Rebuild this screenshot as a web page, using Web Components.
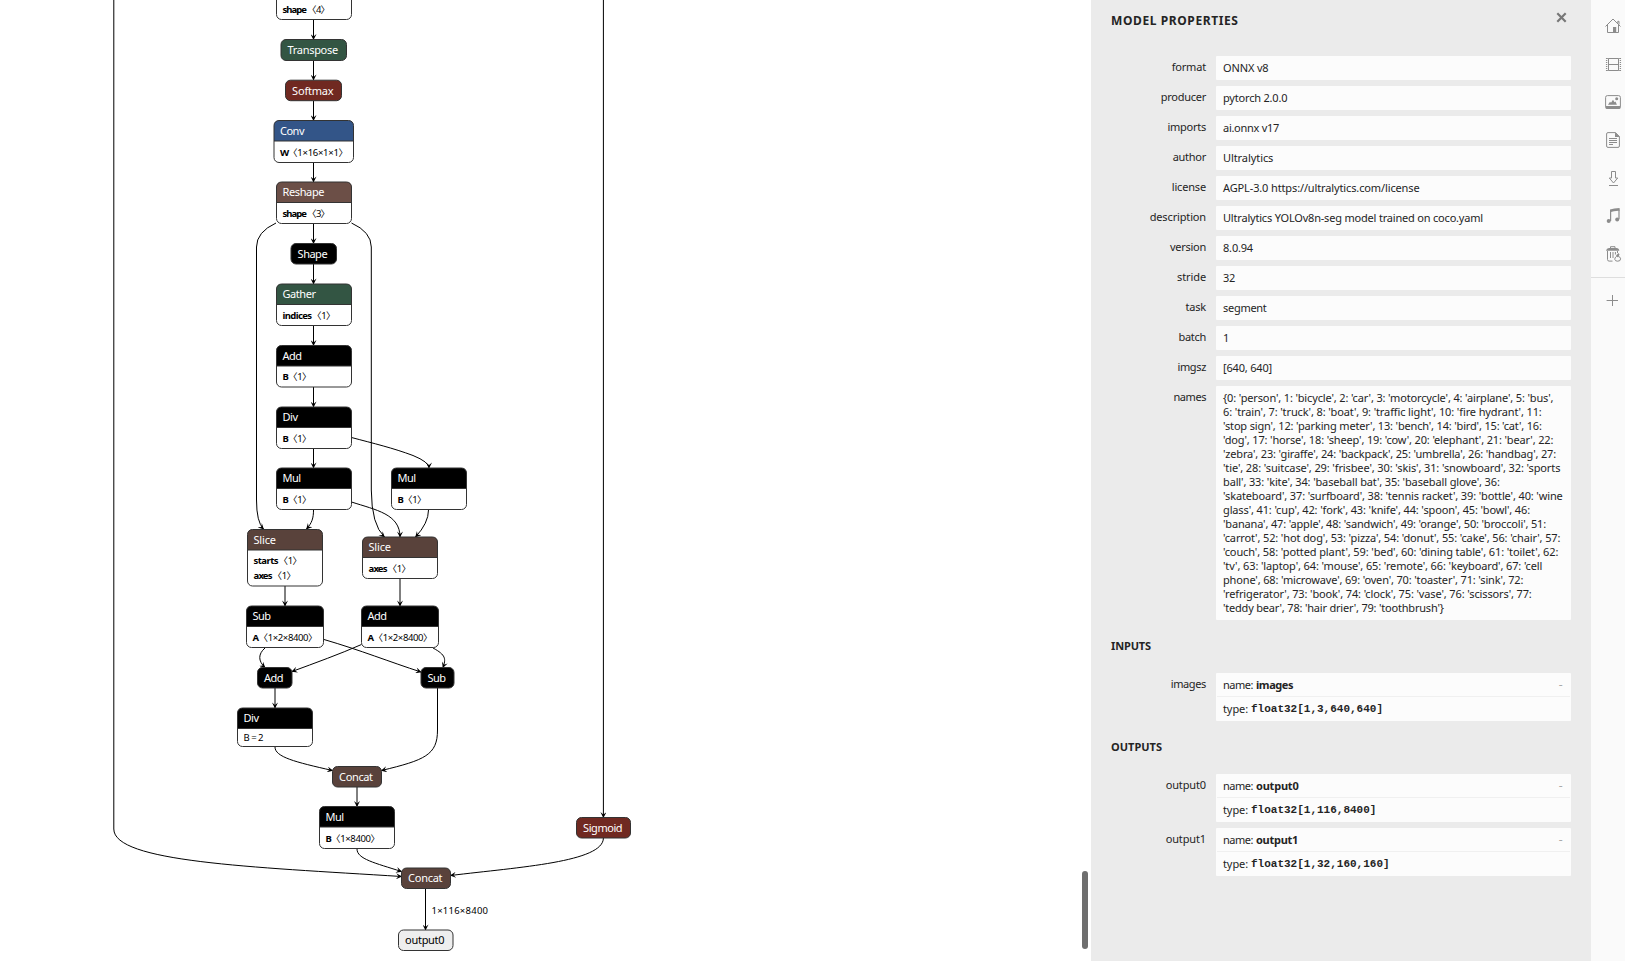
<!DOCTYPE html>
<html lang="en">
<head>
<meta charset="utf-8">
<title>Model viewer</title>
<style>
    body {
        margin: 0;
        font-family: "Noto Sans", "Open Sans", "Noto Sans CJK SC", sans-serif;
        font-size: 11px;
        background: #fff;
        overflow: hidden;
    }
</style>
</head>
<body>
<viewer-app></viewer-app>

<script>
const NODES = [
    // scrolled partly out, only the last row shows
    { x: 276.5, y: -22, w: 75, h: 41.5, head: 20.5, title: '', tw: 0, fill: '#6c4f47', rows: [['shape', 24.5, '〈4〉', 12, 35]] },
    { x: 281, y: 39.5, w: 65.5, h: 21, title: 'Transpose', tw: 50.5, fill: '#335543' },
    { x: 285.5, y: 80.2, w: 56, h: 20.5, title: 'Softmax', tw: 41.5, fill: '#702921' },
    { x: 274, y: 120.5, w: 79.5, h: 42, head: 20.5, title: 'Conv', tw: 24.5, fill: '#335588', rows: [['W', 8, '〈1×16×1×1〉', 49, 35.5]] },
    { x: 276.5, y: 182, w: 75, h: 41.5, head: 20.5, title: 'Reshape', tw: 42, fill: '#6c4f47', rows: [['shape', 24.5, '〈3〉', 12, 35]] },
    { x: 291, y: 243.5, w: 45.5, h: 20.5, title: 'Shape', tw: 30, fill: '#000' },
    { x: 276.5, y: 284, w: 75, h: 41.5, head: 20.5, title: 'Gather', tw: 33.5, fill: '#335543', rows: [['indices', 29.5, '〈1〉', 12.5, 35]] },
    { x: 276.5, y: 345.5, w: 75, h: 41.5, head: 20.5, title: 'Add', tw: 19.5, fill: '#000', rows: [['B', 5.5, '〈1〉', 12.5, 34.5]] },
    { x: 276.5, y: 407, w: 75, h: 41.5, head: 20.5, title: 'Div', tw: 15.5, fill: '#000', rows: [['B', 5.5, '〈1〉', 12.5, 35]] },
    { x: 276.5, y: 468, w: 75, h: 41.5, head: 20.5, title: 'Mul', tw: 18.5, fill: '#000', rows: [['B', 5.5, '〈1〉', 12.5, 35]] },
    { x: 391.5, y: 468, w: 75, h: 41.5, head: 20.5, title: 'Mul', tw: 18.5, fill: '#000', rows: [['B', 5.5, '〈1〉', 12.5, 35]] },
    { x: 247.5, y: 529.5, w: 75, h: 56.5, head: 20.5, title: 'Slice', tw: 22.5, fill: '#59423b', rows: [['starts', 25, '〈1〉', 12.5, 34.5], ['axes', 19, '〈1〉', 12.5, 49.5]] },
    { x: 362.5, y: 537, w: 75, h: 41.5, head: 20.5, title: 'Slice', tw: 22.5, fill: '#59423b', rows: [['axes', 19, '〈1〉', 12.5, 35]] },
    { x: 246.5, y: 606, w: 77, h: 41.5, head: 20.5, title: 'Sub', tw: 18.5, fill: '#000', rows: [['A', 6, '〈1×2×8400〉', 48, 35]] },
    { x: 361.5, y: 606, w: 77, h: 41.5, head: 20.5, title: 'Add', tw: 19.5, fill: '#000', rows: [['A', 6, '〈1×2×8400〉', 48, 35]] },
    { x: 257.5, y: 667.5, w: 34.5, h: 20.5, title: 'Add', tw: 19.5, fill: '#000' },
    { x: 421, y: 667.5, w: 33, h: 20.5, title: 'Sub', tw: 18.5, fill: '#000' },
    { x: 237.5, y: 708, w: 75, h: 38.5, head: 20.5, title: 'Div', tw: 15.5, fill: '#000', rows: [['', 0, 'B = 2', 20, 33]] },
    { x: 332.5, y: 766.5, w: 49, h: 20.5, title: 'Concat', tw: 34, fill: '#59423b' },
    { x: 319.5, y: 806.5, w: 75, h: 42, head: 20.5, title: 'Mul', tw: 18.5, fill: '#000', rows: [['B', 5.5, '〈1×8400〉', 38, 35.5]] },
    { x: 401.5, y: 868, w: 49, h: 20.5, title: 'Concat', tw: 34.5, fill: '#59423b' },
    { x: 576.5, y: 817.5, w: 54, h: 20.5, title: 'Sigmoid', tw: 39.5, fill: '#702921' },
    { x: 398.5, y: 930, w: 54.5, h: 20.5, title: 'output0', tw: 39.5, fill: '#eee', color: '#000' },
];

const EDGES = [
    'M313.5 20V39.5', 'M313.5 61V80', 'M313.5 101V120.5', 'M313.5 163V182',
    'M313.5 224V243.5', 'M313.5 264V284', 'M313.5 326V345.5', 'M313.5 387V407',
    'M313.5 449V468',
    'M276 223Q256.5 232 256.5 247V500Q256.5 522 263.5 529',
    'M351.5 223Q371.3 232 371.3 247V490Q371.5 525 384.5 537',
    'M351.5 437.5C374 443.5 393 448 413 455.500Q429 462 429 468',
    'M313.5 510C313.5 518 312 523 306.500 529',
    'M351.5 502C376 510 400 514 400 537',
    'M428.5 510Q428.500 523 415.500 537',
    'M285 586V606', 'M400 579V606',
    'M265 648C258 654 258 661 265 667.5',
    'M324 639.5C360 650 390 662 421 672',
    'M361.5 644.5C340 654 315 663 292 671.5',
    'M433 648C446 655 446 659 443 667.5',
    'M275 688V708',
    'M437.5 688V730C437.5 755 425 760 381.5 770.5',
    'M275 747C275 757 295 762 332.5 770.5',
    'M357 787V806.5',
    'M357 849C357 859 375 863 401.5 871.5',
    'M113.8 0V829C113.8 862 250 867 401.5 876.5',
    'M603.4 0V817.5',
    'M603.4 838C603.4 862 520 867 450.500 875.5',
    'M425.5 889V930',
];

// [label, label width, value lines as [text, width]]
const PROPERTIES = [
    ['format', 34.3, [['ONNX v8', 45.5]]],
    ['producer', 45.3, [['pytorch 2.0.0', 64.3]]],
    ['imports', 38.6, [['ai.onnx v17', 56]]],
    ['author', 33.3, [['Ultralytics', 50.3]]],
    ['license', 34.3, [['AGPL-3.0 https://ultralytics.com/license', 196.5]]],
    ['description', 56.3, [['Ultralytics YOLOv8n-seg model trained on coco.yaml', 260]]],
    ['version', 36, [['8.0.94', 30]]],
    ['stride', 29, [['32', 12]]],
    ['task', 20.6, [['segment', 43.5]]],
    ['batch', 27.6, [['1', 6]]],
    ['imgsz', 28.6, [['[640, 640]', 49]]],
    ['names', 32.5, [
        ["{0: 'person', 1: 'bicycle', 2: 'car', 3: 'motorcycle', 4: 'airplane', 5: 'bus',", 330.3],
        ["6: 'train', 7: 'truck', 8: 'boat', 9: 'traffic light', 10: 'fire hydrant', 11:", 318.7],
        ["'stop sign', 12: 'parking meter', 13: 'bench', 14: 'bird', 15: 'cat', 16:", 318.7],
        ["'dog', 17: 'horse', 18: 'sheep', 19: 'cow', 20: 'elephant', 21: 'bear', 22:", 330.3],
        ["'zebra', 23: 'giraffe', 24: 'backpack', 25: 'umbrella', 26: 'handbag', 27:", 333],
        ["'tie', 28: 'suitcase', 29: 'frisbee', 30: 'skis', 31: 'snowboard', 32: 'sports", 337.3],
        ["ball', 33: 'kite', 34: 'baseball bat', 35: 'baseball glove', 36:", 276.7],
        ["'skateboard', 37: 'surfboard', 38: 'tennis racket', 39: 'bottle', 40: 'wine", 339.7],
        ["glass', 41: 'cup', 42: 'fork', 43: 'knife', 44: 'spoon', 45: 'bowl', 46:", 307],
        ["'banana', 47: 'apple', 48: 'sandwich', 49: 'orange', 50: 'broccoli', 51:", 323],
        ["'carrot', 52: 'hot dog', 53: 'pizza', 54: 'donut', 55: 'cake', 56: 'chair', 57:", 337.3],
        ["'couch', 58: 'potted plant', 59: 'bed', 60: 'dining table', 61: 'toilet', 62:", 335.3],
        ["'tv', 63: 'laptop', 64: 'mouse', 65: 'remote', 66: 'keyboard', 67: 'cell", 319.3],
        ["phone', 68: 'microwave', 69: 'oven', 70: 'toaster', 71: 'sink', 72:", 300.3],
        ["'refrigerator', 73: 'book', 74: 'clock', 75: 'vase', 76: 'scissors', 77:", 308.7],
        ["'teddy bear', 78: 'hair drier', 79: 'toothbrush'}", 220.7],
    ]],
];

const ICONS = {
    home: '<path d="M1.500 10.500 9 3l7.500 7.500M3.500 9v7.500h11V9M13.800 7V5.300h1.200V8.500"/><path fill="currentColor" stroke="none" d="M9 11h3.200v5.500H9z"/>',
    film: '<path d="M4.500 4.500h10v12h-10zM4.500 10.500h10"/><path stroke-dasharray="1 1" stroke-width="1.300" d="M2.600 4v13M16.400 4v13"/><path d="M2.600 4.500h2M2.600 16.500h2M14.400 4.500h2M14.400 16.500h2" stroke-width=".8"/>',
    image: '<rect x="1.600" y="3.600" width="14.800" height="12.600" rx="1.800"/><path fill="currentColor" stroke="none" d="M1.500 14h15v2q0 1-1.500 1H3q-1.500 0-1.500-1zM4 12.800l2-3 1 1 2-3 1.500 2.500 1-.8 1.400 3.300z"/><circle cx="12.700" cy="6.700" r="1.500" fill="currentColor" stroke="none"/>',
    document: '<path d="M4 2.600h7.500l3.900 3.900v9.500q0 1.400-1.400 1.400H4q-1.400 0-1.400-1.400V4q0-1.400 1.400-1.400z"/><path fill="currentColor" stroke="none" d="M11 2.300 15.700 7H11z"/><path d="M5 8.500h8M5 10.500h8M5 12.500h8M5 14.500h4"/>',
    download: '<path d="M7.500 3.500h4v6.500h2.200L9.500 15 5.300 10h2.200zM5 17.500h9"/>',
    music: '<path stroke-width="1.200" d="M6.600 15V4.600M15 13V3.500"/><path fill="currentColor" stroke="none" d="M6 3.500Q10 2 15.600 2v2.700Q10 4.500 6 6.300z"/><ellipse cx="4.700" cy="15" rx="2" ry="2" fill="currentColor" stroke="none"/><ellipse cx="13.200" cy="13.500" rx="2" ry="2" fill="currentColor" stroke="none"/>',
    trash: '<path fill="currentColor" stroke="none" d="M2 6.700Q2.500 4 5 4h7.500q2.500 0 2.800 2.700z"/><path d="M6.500 4V2.700h4.500V4M3.500 7v8.500q0 1.600 1.600 1.600H8.500M13.500 7v2M6.500 8v6M9 8v6M11.400 8v2.500"/><path d="M14.500 12 12.500 12.500Q10.500 13.500 10.800 15.500 11.200 17.200 13.700 17.200 16.600 17.200 16.600 14.800 16.500 13 14.500 12.500"/><path fill="currentColor" stroke="none" d="M12 11.500l2.500-2.500 1 1.500-1.500 3z"/>',
    plus: '<path d="M2.600 10.500h11.400M8.500 5v11"/>',
};

/**
 * Text set to a given width by letter spacing.
 *
 * @element fit-text
 */
class FitText extends HTMLElement {
    constructor() {
        super();
        this.attachShadow({ mode: 'open' });
        this.shadowRoot.innerHTML = `
            <style>
                :host { display: inline-block; white-space: pre; }
            </style>
            <slot></slot>
        `.replace(/\n\s*/g, '');
    }

    connectedCallback() {
        const width = parseFloat(this.getAttribute('width'));
        const natural = this.getBoundingClientRect().width;
        if (!width || !natural) return;
        this.style.letterSpacing = `${(width - natural) / this.textContent.length}px`;
    }
}

/**
 * One operator box of the graph.
 *
 * @element graph-node
 */
class GraphNode extends HTMLElement {
    constructor() {
        super();
        this.attachShadow({ mode: 'open' });
    }

    set data(node) {
        this.style.left = `${Math.floor(node.x)}px`;
        this.style.top = `${Math.floor(node.y)}px`;
        this.render(node);
    }

    row([name, nameWidth, value, valueWidth, y]) {
        const x = 6;
        if (!name) {
            return `<text class="row" x="${x}" y="${y}" textLength="${valueWidth}">${value}</text>`;
        }
        // the angle brackets are full width, half of each is blank
        return `
            <text class="row name" x="${x}" y="${y}" textLength="${nameWidth}">${name}</text>
            <text class="row" x="${x + nameWidth + 0.1}" y="${y}" textLength="${valueWidth + 11}">${value}</text>
        `;
    }

    render(node) {
        const { w, h, head = h, title, tw, fill, color = '#fff', rows = [] } = node;
        const dx = node.x - Math.floor(node.x);
        const dy = node.y - Math.floor(node.y);
        const top = rows.length
            ? `M0 ${head}V5Q0 0 5 0H${w - 5}Q${w} 0 ${w} 5V${head}Z`
            : '';
        this.shadowRoot.innerHTML = /*html*/`
            <style>
                :host { display: block; position: absolute; }
                svg { display: block; overflow: visible; }
                .title { font-size: 11px; }
                .row { font-size: 9.5px; }
                .name { font-weight: 700; }
            </style>
            <svg width="${w}" height="${h}">
                <g transform="translate(${dx} ${dy})">
                    <rect width="${w}" height="${h}" rx="5" fill="${rows.length ? '#fff' : fill}"/>
                    ${top ? `<path d="${top}" fill="${fill}"/><path d="M0 ${head}H${w}" stroke="#333"/>` : ''}
                    <rect width="${w}" height="${h}" rx="5" fill="none" stroke="#333"/>
                    ${title ? `<text class="title" x="${rows.length ? 6 : 6.6}" y="14.4" fill="${color}" textLength="${tw}">${title}</text>` : ''}
                    ${rows.map(this.row).join('')}
                </g>
            </svg>
        `;
    }
}

/**
 * The graph canvas, edges below nodes.
 *
 * @element model-graph
 */
class ModelGraph extends HTMLElement {
    constructor() {
        super();
        this.attachShadow({ mode: 'open' });
    }

    connectedCallback() {
        this.shadowRoot.innerHTML = /*html*/`
            <style>
                :host { display: block; position: relative; overflow: hidden; background: #fff; }
                .edges { display: block; }
                .edges text { font-size: 9.5px; }
                .thumb {
                    position: absolute;
                    right: 3px;
                    top: 871px;
                    width: 6px;
                    height: 78px;
                    border-radius: 3px;
                    background: #6e6e6e;
                }
            </style>
            <svg class="edges" width="1091" height="961">
                <defs>
                    <marker id="vee" viewBox="0 0 10 10" refX="9" refY="5" markerUnits="userSpaceOnUse" markerWidth="7" markerHeight="6" orient="auto">
                        <path d="M0 0L10 5L0 10L4 5z"/>
                    </marker>
                </defs>
                ${EDGES.map(d => `<path d="${d}" fill="none" stroke="#000" marker-end="url(#vee)"/>`).join('')}
                <text x="431.5" y="914" textLength="56.5">1×116×8400</text>
            </svg>
            <div class="thumb"></div>
        `;
        NODES.forEach(data => {
            const node = document.createElement('graph-node');
            node.data = data;
            this.shadowRoot.appendChild(node);
        });
    }
}

/**
 * A label and its value box.
 *
 * @element property-row
 */
class PropertyRow extends HTMLElement {
    constructor() {
        super();
        this.attachShadow({ mode: 'open' });
    }

    connectedCallback() {
        this.shadowRoot.innerHTML = /*html*/`
            <style>
                :host {
                    display: grid;
                    grid-template-columns: 95px 355px;
                    column-gap: 10px;
                    margin-bottom: 6px;
                    line-height: 14px;
                    color: #242424;
                }
                .label { text-align: right; padding-top: 4px; white-space: nowrap; }
                .value { background: #fcfcfc; border-radius: 1px; }
            </style>
            <div class="label">
                <fit-text width="${this.getAttribute('label-width')}">${this.getAttribute('label')}</fit-text>
            </div>
            <div class="value"><slot></slot></div>
        `;
    }
}

/**
 * Plain lines of a property value.
 *
 * @element value-text
 */
class ValueText extends HTMLElement {
    constructor() {
        super();
        this.attachShadow({ mode: 'open' });
        this.shadowRoot.innerHTML = `
            <style>
                :host { display: flex; flex-direction: column; align-items: flex-start; padding: 5px 7px; }
                ::slotted(*) { height: 14px; }
            </style>
            <slot></slot>
        `;
    }
}

/**
 * Name and type of a model argument.
 *
 * @element value-argument
 */
class ValueArgument extends HTMLElement {
    constructor() {
        super();
        this.attachShadow({ mode: 'open' });
    }

    connectedCallback() {
        this.shadowRoot.innerHTML = /*html*/`
            <style>
                :host { display: block; height: 48px; }
                .line { display: flex; padding: 5px 7px 4px; height: 14px; }
                .type { border-top: 1px solid #f0f0f0; margin: 0 1px; padding: 5px 6px 4px; }
                .toggle { margin: 0 1.5px 0 auto; color: #aaa; font-size: 12px; }
                b { padding-left: 3px; }
                code { font: bold 11px/15px "Liberation Mono", monospace; padding-left: 3px; }
            </style>
            <div class="line">
                <fit-text width="30">name:</fit-text>
                <b><fit-text width="${this.getAttribute('name-width')}">${this.getAttribute('name')}</fit-text></b>
                <span class="toggle">-</span>
            </div>
            <div class="line type">
                <fit-text width="25">type:</fit-text>
                <code>${this.getAttribute('type')}</code>
            </div>
        `;
    }
}

/**
 * Model properties panel.
 *
 * @element model-sidebar
 */
class ModelSidebar extends HTMLElement {
    constructor() {
        super();
        this.attachShadow({ mode: 'open' });
    }

    connectedCallback() {
        const escape = text => text.replace(/</g, '&lt;');
        this.shadowRoot.innerHTML = /*html*/`
            <style>
                :host { display: block; box-sizing: border-box; background: #ebebeb; padding: 0 20px; color: #242424; }
                header { display: flex; justify-content: space-between; align-items: flex-start; height: 56px; }
                h1 { margin: 0; padding-top: 12px; font-size: 12px; line-height: 18px; }
                header svg { margin: 12px 4.5px 0 0; }
                h2 { margin: 0; padding: 13px 0 20px; font-size: 11px; line-height: 14px; }
            </style>
            <header>
                <h1><fit-text width="127.5">MODEL PROPERTIES</fit-text></h1>
                <svg width="11" height="11"><path d="M1.300 1.300 9.700 9.700M9.700 1.300 1.300 9.700" stroke="#777" stroke-width="2.200"/></svg>
            </header>
            ${PROPERTIES.map(([label, width, lines]) => `
                <property-row label="${label}" label-width="${width}">
                    <value-text>${lines.map(([text, w]) => `<fit-text width="${w}">${escape(text)}</fit-text>`).join('')}</value-text>
                </property-row>
            `).join('')}
            <h2><fit-text width="40">INPUTS</fit-text></h2>
            <property-row label="images" label-width="35.3">
                <value-argument name="images" name-width="37" type="float32[1,3,640,640]"></value-argument>
            </property-row>
            <h2><fit-text width="51">OUTPUTS</fit-text></h2>
            <property-row label="output0" label-width="40.3">
                <value-argument name="output0" name-width="42.5" type="float32[1,116,8400]"></value-argument>
            </property-row>
            <property-row label="output1" label-width="40.3">
                <value-argument name="output1" name-width="42" type="float32[1,32,160,160]"></value-argument>
            </property-row>
        `;
    }
}

/**
 * Narrow strip of place shortcuts.
 *
 * @element places-bar
 */
class PlacesBar extends HTMLElement {
    constructor() {
        super();
        this.attachShadow({ mode: 'open' });
    }

    connectedCallback() {
        const icon = name => `<svg class="${name}" width="18" height="20" fill="none" stroke="currentColor">${ICONS[name]}</svg>`;
        const names = Object.keys(ICONS).filter(name => name !== 'plus');
        this.shadowRoot.innerHTML = /*html*/`
            <style>
                :host { display: flex; flex-direction: column; background: #fafafa; color: #8c8c8c; }
                .group { display: flex; flex-direction: column; gap: 18px; padding: 16px 0 13px 13px; }
                .group + .group { border-top: 1px solid #dedede; padding-top: 12px; }
                svg { display: block; }
            </style>
            <div class="group">${names.map(icon).join('')}</div>
            <div class="group">${icon('plus')}</div>
        `;
    }
}

/**
 * The whole window.
 *
 * @element viewer-app
 */
class ViewerApp extends HTMLElement {
    constructor() {
        super();
        this.attachShadow({ mode: 'open' });
    }

    connectedCallback() {
        this.shadowRoot.innerHTML = /*html*/`
            <style>
                :host {
                    display: grid;
                    grid-template-columns: 1091px 500px 34px;
                    width: 1625px;
                    height: 961px;
                }
            </style>
            <model-graph></model-graph>
            <model-sidebar></model-sidebar>
            <places-bar></places-bar>
        `;
    }
}

customElements.define('graph-node', GraphNode);
customElements.define('model-graph', ModelGraph);
customElements.define('value-text', ValueText);
customElements.define('value-argument', ValueArgument);
customElements.define('property-row', PropertyRow);
customElements.define('model-sidebar', ModelSidebar);
customElements.define('places-bar', PlacesBar);
customElements.define('viewer-app', ViewerApp);
// measures its text, so it comes after everything that lays it out
customElements.define('fit-text', FitText);
</script>
</body>
</html>
